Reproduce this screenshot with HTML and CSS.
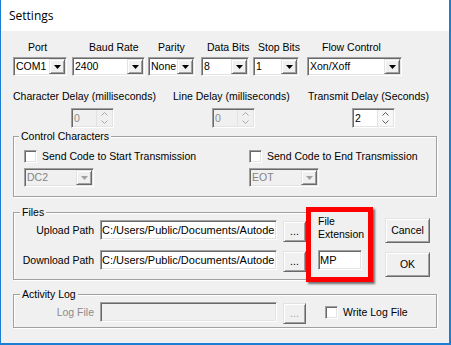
FILE: index.html
```html
<!DOCTYPE html>
<html>
<head>
<meta charset="utf-8">
<title>Settings</title>
<link rel="stylesheet" href="styles.css">
</head>
<body>
<div class="window">
  <div class="titlebar">Settings</div>
  <div class="content">
    <div class="port-row">
      <div class="field f-port">
        <div class="lbl">Port</div>
        <div class="combo"><span class="combo-text">COM1</span><span class="drop"><svg class="tri" width="7" height="4" viewBox="0 0 7 4"><path d="M0 0H7L3.5 4Z"/></svg></span></div>
      </div>
      <div class="field f-baud">
        <div class="lbl">Baud Rate</div>
        <div class="combo"><span class="combo-text">2400</span><span class="drop"><svg class="tri" width="7" height="4" viewBox="0 0 7 4"><path d="M0 0H7L3.5 4Z"/></svg></span></div>
      </div>
      <div class="field f-parity">
        <div class="lbl">Parity</div>
        <div class="combo"><span class="combo-text">None</span><span class="drop"><svg class="tri" width="7" height="4" viewBox="0 0 7 4"><path d="M0 0H7L3.5 4Z"/></svg></span></div>
      </div>
      <div class="field f-data">
        <div class="lbl">Data Bits</div>
        <div class="combo"><span class="combo-text">8</span><span class="drop"><svg class="tri" width="7" height="4" viewBox="0 0 7 4"><path d="M0 0H7L3.5 4Z"/></svg></span></div>
      </div>
      <div class="field f-stop">
        <div class="lbl">Stop Bits</div>
        <div class="combo"><span class="combo-text">1</span><span class="drop"><svg class="tri" width="7" height="4" viewBox="0 0 7 4"><path d="M0 0H7L3.5 4Z"/></svg></span></div>
      </div>
      <div class="field f-flow">
        <div class="lbl">Flow Control</div>
        <div class="combo"><span class="combo-text">Xon/Xoff</span><span class="drop"><svg class="tri" width="7" height="4" viewBox="0 0 7 4"><path d="M0 0H7L3.5 4Z"/></svg></span></div>
      </div>
    </div>

    <div class="delay-labels">
      <span class="dl dl-char">Character Delay (milliseconds)</span>
      <span class="dl dl-line">Line Delay (milliseconds)</span>
      <span class="dl">Transmit Delay (Seconds)</span>
    </div>
    <div class="spin-row">
      <div class="spin is-disabled sp-char"><span class="spin-val">0</span><span class="updown"><span class="ud"><svg class="chev" width="7" height="4" viewBox="0 0 7 4"><path d="M0.5 3.5L3.5 0.5L6.5 3.5"/></svg></span><span class="ud"><svg class="chev" width="7" height="4" viewBox="0 0 7 4"><path d="M0.5 0.5L3.5 3.5L6.5 0.5"/></svg></span></span></div>
      <div class="spin is-disabled sp-line"><span class="spin-val">0</span><span class="updown"><span class="ud"><svg class="chev" width="7" height="4" viewBox="0 0 7 4"><path d="M0.5 3.5L3.5 0.5L6.5 3.5"/></svg></span><span class="ud"><svg class="chev" width="7" height="4" viewBox="0 0 7 4"><path d="M0.5 0.5L3.5 3.5L6.5 0.5"/></svg></span></span></div>
      <div class="spin sp-tx"><span class="spin-val">2</span><span class="updown"><span class="ud"><svg class="chev" width="7" height="4" viewBox="0 0 7 4"><path d="M0.5 3.5L3.5 0.5L6.5 3.5"/></svg></span><span class="ud"><svg class="chev" width="7" height="4" viewBox="0 0 7 4"><path d="M0.5 0.5L3.5 3.5L6.5 0.5"/></svg></span></span></div>
    </div>

    <div class="group g-ctrl">
      <div class="group-title">Control Characters</div>
      <div class="ctrl-body">
        <div class="check-row">
          <div class="check c-start"><span class="box"></span><span class="check-text">Send Code to Start Transmission</span></div>
          <div class="check"><span class="box"></span><span class="check-text">Send Code to End Transmission</span></div>
        </div>
        <div class="code-row">
          <div class="combo is-disabled code-combo"><span class="combo-text">DC2</span><span class="drop"><svg class="tri" width="7" height="4" viewBox="0 0 7 4"><path d="M0 0H7L3.5 4Z"/></svg></span></div>
          <div class="combo is-disabled code-combo c-eot"><span class="combo-text">EOT</span><span class="drop"><svg class="tri" width="7" height="4" viewBox="0 0 7 4"><path d="M0 0H7L3.5 4Z"/></svg></span></div>
        </div>
      </div>
    </div>

    <div class="files-row">
      <div class="group g-files">
        <div class="group-title">Files</div>
        <div class="files-body">
          <div class="path-row">
            <span class="path-label">Upload Path</span>
            <div class="edit path-edit">C:/Users/Public/Documents/Autode</div>
            <div class="btn btn-browse">...</div>
          </div>
          <div class="path-row">
            <span class="path-label">Download Path</span>
            <div class="edit path-edit">C:/Users/Public/Documents/Autode</div>
            <div class="btn btn-browse">...</div>
          </div>
        </div>
      </div>
      <div class="highlight">
        <div class="ext-label">File<br>Extension</div>
        <div class="edit ext-edit">MP</div>
      </div>
      <div class="actions">
        <div class="btn btn-action">Cancel</div>
        <div class="btn btn-action btn-ok">OK</div>
      </div>
    </div>

    <div class="group g-log">
      <div class="group-title">Activity Log</div>
      <div class="log-body">
        <span class="path-label is-disabled">Log File</span>
        <div class="edit path-edit is-disabled"></div>
        <div class="btn btn-browse is-disabled">...</div>
        <div class="check log-check"><span class="box"></span><span class="check-text">Write Log File</span></div>
      </div>
    </div>
  </div>
</div>
</body>
</html>
```

FILE: styles.css
```css
* { box-sizing: border-box; }
html, body { margin: 0; padding: 0; background: #fff; }
body {
  font-family: "Liberation Sans", Arial, sans-serif;
  font-size: 10.5px;
  line-height: 13px;
  color: #000;
}

.window {
  width: 451px;
  height: 345px;
  background: #f0f0f0;
  border-style: solid;
  border-color: #1a7fd4;
  border-width: 0 2px 2px 1px;
}

.titlebar {
  height: 31px;
  background: #fff;
  padding: 8px 0 0 8px;
  font-family: "Open Sans", "Liberation Sans", sans-serif;
  font-size: 12px;
  line-height: 16px;
}

.content { padding: 10px 0 0 12px; }

/* sunken 3D frames */
.combo, .spin, .edit, .box {
  border: 1px solid;
  border-color: #a0a0a0 #fff #fff #a0a0a0;
  box-shadow: inset 1px 1px 0 #696969, inset -1px -1px 0 #e3e3e3;
  background: #fff;
}

/* raised 3D buttons */
.btn, .drop {
  background: #f0f0f0;
  border: 1px solid;
  border-color: #e3e3e3 #696969 #696969 #e3e3e3;
  box-shadow: inset 1px 1px 0 #fff, inset -1px -1px 0 #a0a0a0;
}

/* top row */
.port-row { display: flex; }
.field { flex: none; display: flex; flex-direction: column; }
.lbl { height: 13px; white-space: nowrap; }
.field .combo { margin-top: 3px; }
.f-port { width: 54px; }
.f-port .lbl { padding-left: 15px; }
.f-baud { width: 73px; margin-left: 5px; }
.f-baud .lbl { padding-left: 17px; }
.f-parity { width: 47px; margin-left: 3px; }
.f-parity .lbl { padding-left: 10px; }
.f-data { width: 48px; margin-left: 6px; }
.f-data .lbl { padding-left: 6px; }
.f-stop { width: 46px; margin-left: 4px; }
.f-stop .lbl { padding-left: 5px; }
.f-flow { width: 95px; margin-left: 8px; }
.f-flow .lbl { padding-left: 15px; }

.combo { display: flex; align-items: center; height: 19px; }
.combo-text { flex: 1; min-width: 0; padding-left: 2px; white-space: nowrap; overflow: hidden; }
.drop {
  flex: none;
  width: 16px;
  height: 15px;
  margin: 1px;
  display: flex;
  align-items: center;
  justify-content: center;
}
.tri { display: block; fill: #000; }
.combo.is-disabled { background: #f0f0f0; color: #838383; }
.combo.is-disabled .tri { fill: #a0a0a0; }

/* delays */
.delay-labels { display: flex; margin-top: 14px; white-space: nowrap; }
.dl { flex: none; }
.dl-char { width: 160px; }
.dl-line { width: 135px; }

.spin-row { display: flex; margin-top: 5px; }
.spin { display: flex; flex: none; width: 43px; height: 20px; }
.sp-char { margin-left: 58px; }
.sp-line { margin-left: 98px; }
.sp-tx { margin-left: 97px; }
.spin-val { flex: 1; padding-left: 2px; line-height: 18px; }
.updown {
  flex: none;
  width: 16px;
  margin: 1px 1px 1px 0;
  display: flex;
  flex-direction: column;
  background: #f7f7f7;
  border-left: 1px solid #e3e3e3;
}
.ud { flex: 1; display: flex; align-items: center; justify-content: center; }
.chev { display: block; fill: none; stroke: #5a5a5a; stroke-width: 1; }
.spin.is-disabled { background: #f0f0f0; color: #8c8c8c; }
.spin.is-disabled .updown { background: #f0f0f0; }
.spin.is-disabled .chev { stroke: #a8a8a8; }

/* group boxes */
.group {
  border: 1px solid #a0a0a0;
  box-shadow: 1px 1px 0 #fff, inset 1px 1px 0 #fff;
}
.group-title {
  width: max-content;
  height: 13px;
  margin: -7px 0 0 6px;
  padding: 0 2px;
  background: #f0f0f0;
  line-height: 13px;
  white-space: nowrap;
}
.g-ctrl { width: 424px; margin-top: 8px; }
.g-ctrl .group-title { margin-left: 5px; }
.ctrl-body { padding: 7px 0 9px 10px; }
.check-row { display: flex; }
.check { display: flex; align-items: center; flex: none; }
.c-start { width: 225px; }
.box { width: 13px; height: 13px; flex: none; }
.check-text { margin-left: 5px; white-space: nowrap; }
.code-row { display: flex; margin-top: 5px; }
.code-combo { width: 70px; flex: none; }
.c-eot { margin-left: 155px; }

/* files */
.files-row { display: flex; align-items: flex-start; margin-top: 15px; }
.g-files { width: 296px; flex: none; }
.files-body { padding: 1px 0 7px 0; }
.path-row { display: flex; align-items: flex-start; height: 22px; }
.path-row + .path-row { margin-top: 8px; }
.path-label {
  width: 80px;
  flex: none;
  text-align: right;
  line-height: 20px;
  white-space: nowrap;
}
.path-label.is-disabled { color: #8c8c8c; }
.edit {
  height: 20px;
  padding-left: 1px;
  font-size: 11px;
  line-height: 18px;
  white-space: nowrap;
  overflow: hidden;
}
.edit.is-disabled { background: #f0f0f0; }
.path-edit { width: 177px; margin-left: 6px; flex: none; }

.btn {
  display: flex;
  align-items: center;
  justify-content: center;
  white-space: nowrap;
}
.btn.is-disabled { color: #a0a0a0; }
.btn-browse { width: 23px; height: 21px; margin: 1px 0 0 6px; flex: none; }

.highlight {
  flex: none;
  position: relative;
  z-index: 1;
  width: 67px;
  height: 75px;
  margin: -5px 0 0 -3px;
  padding: 3px 0 0 7px;
  border: 5px solid #f00;
  background: #f0f0f0;
  box-shadow: 2px 2px 2px rgba(0, 0, 0, 0.55);
}
.ext-label { line-height: 13px; }
.ext-edit { width: 44px; margin-top: 9px; }

.actions { flex: none; display: flex; flex-direction: column; margin: 6px 0 0 12px; }
.btn-action { width: 45px; height: 25px; }
.btn-ok { margin-top: 9px; }

/* activity log */
.g-log { width: 424px; margin-top: 12px; }
.log-body { display: flex; align-items: flex-start; padding: 1px 0 3px 0; }
.log-check { margin: 4px 0 0 19px; }
```
